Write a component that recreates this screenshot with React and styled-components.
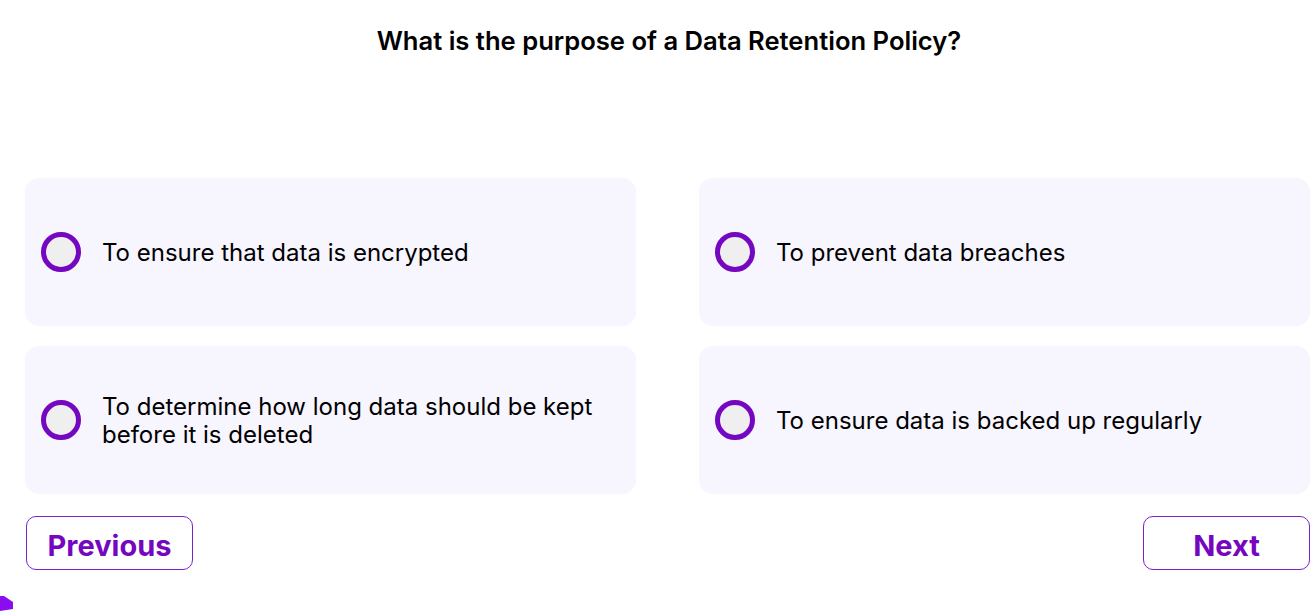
import React, { useState } from 'react';
import styled, { createGlobalStyle } from 'styled-components';

const GlobalStyle = createGlobalStyle`
  html, body {
    margin: 0;
    padding: 0;
    background: #ffffff;
    font-family: Inter, "Noto Sans", sans-serif;
    overflow: hidden;
  }
`;

const Page = styled.div`
  position: relative;
  width: 1315px;
  height: 612px;
  box-sizing: border-box;
  padding: 26px 5px 0 25px;
  display: flex;
  flex-direction: column;
`;

const Question = styled.h1`
  margin: 0;
  text-align: center;
  font-size: 25.6px;
  line-height: 29px;
  font-weight: 600;
  color: #000;
  padding-left: 3px;
`;

const Options = styled.div`
  margin-top: 123px;
  display: grid;
  grid-template-columns: 611px 611px;
  column-gap: 63px;
  row-gap: 20px;
`;

const OptionCard = styled.label`
  display: flex;
  align-items: center;
  gap: 21px;
  height: 148px;
  box-sizing: border-box;
  padding: 0 30px 0 16px;
  background: #f7f5fe;
  border-radius: 14px;
  cursor: pointer;
`;

const Radio = styled.span`
  flex: none;
  width: 40px;
  height: 40px;
  box-sizing: border-box;
  border-radius: 50%;
  border: 5px solid #7407bf;
  background: ${(p) => (p.checked ? '#7407bf' : '#efefef')};
`;

const OptionText = styled.span`
  font-size: 24px;
  line-height: 28px;
  color: #000;
  padding-top: 2px;
`;

const Nav = styled.div`
  margin-top: 22px;
  display: flex;
  justify-content: space-between;
  padding-left: 1px;
`;

const NavButton = styled.button`
  width: 167px;
  height: 54px;
  box-sizing: border-box;
  padding: 5px 0 0;
  border: 1.5px solid #7e1fcc;
  border-radius: 10px;
  background: #fff;
  color: #7407bf;
  font-family: Inter, "Noto Sans", sans-serif;
  font-size: 29px;
  font-weight: 700;
  cursor: pointer;
`;

const CornerBlob = styled.svg`
  position: absolute;
  left: 0;
  bottom: 0;
`;

const options = [
  'To ensure that data is encrypted',
  'To prevent data breaches',
  'To determine how long data should be kept before it is deleted',
  'To ensure data is backed up regularly',
];

export default function App() {
  const [selected, setSelected] = useState(null);
  return (
    <>
      <GlobalStyle />
      <Page>
        <Question>What is the purpose of a Data Retention Policy?</Question>
        <Options>
          {options.map((text, i) => (
            <OptionCard key={i} onClick={() => setSelected(i)}>
              <Radio checked={selected === i} />
              <OptionText>{text}</OptionText>
            </OptionCard>
          ))}
        </Options>
        <Nav>
          <NavButton>Previous</NavButton>
          <NavButton>Next</NavButton>
        </Nav>
        <CornerBlob width="14" height="16" viewBox="0 0 14 16">
          <path d="M0 0 L4 0 L13 6 L13 13 L0 15 Z" fill="#8a0cf2" />
        </CornerBlob>
      </Page>
    </>
  );
}
